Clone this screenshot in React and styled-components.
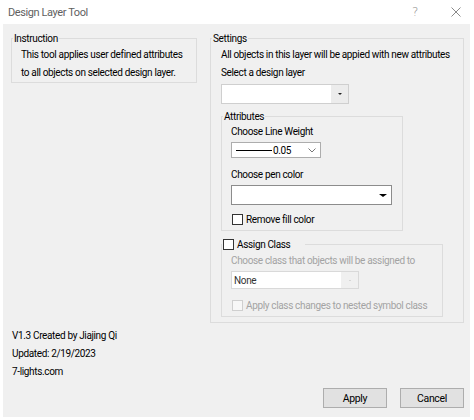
import React from 'react'
import styled, { createGlobalStyle } from "styled-components";

const GlobalStyle = createGlobalStyle`
  body {
    margin: 0;
    background: #ffffff;
    font-family: Roboto, "Liberation Sans", Arial, sans-serif;
    font-size: 10px;
    letter-spacing: -0.35px;
    color: #000;
  }
`;

const Window = styled.div`
  width: 474px;
  height: 420px;
  display: flex;
  flex-direction: column;
  background: #ffffff;
`;

const TitleBar = styled.div`
  height: 24px;
  display: flex;
  align-items: center;
  padding: 0 8px;
  color: #5f5f5f;
  font-size: 11px;
  letter-spacing: -0.4px;
`;

const Title = styled.div`
  flex: 1;
`;

const HelpButton = styled.div`
  width: 20px;
  margin-right: 21px;
  text-align: center;
  color: #8a8a8a;
  font-size: 12px;
  font-family: "DejaVu Sans", sans-serif;
  font-weight: 300;
`;

const CloseButton = styled.div`
  width: 20px;
  display: flex;
  justify-content: center;
`;

const Body = styled.div`
  flex: 1;
  margin: 0 4px 3px 3px;
  background: #f0f0f0;
  padding: 8px 6px 0 8px;
  display: flex;
  flex-direction: column;
`;

const TopRow = styled.div`
  display: flex;
  align-items: flex-start;
  gap: 13px;
`;

const Group = styled.fieldset`
  margin: ${(p) => p.mt || 0}px 0 0 0;
  padding: 0 0 ${(p) => p.pb || 0}px 0;
  width: ${(p) => p.w}px;
  box-sizing: border-box;
  border: 1px solid #dcdcdc;
  min-width: 0;
`;

const GroupContent = styled.div`
  padding-left: ${(p) => p.pl}px;
`;

const Legend = styled.legend`
  margin-left: 1px;
  padding: 0 1px;
  line-height: 13px;
  height: 13px;
`;

const CheckLegend = styled.legend`
  margin-left: 0;
  padding: 0;
  width: 83px;
  height: 13px;
  line-height: 13px;
  display: flex;
  align-items: center;
  gap: 3px;
`;

const Line = styled.div`
  line-height: 18px;
  height: 18px;
  white-space: nowrap;
  color: ${(p) => (p.disabled ? "#a3a3a3" : "#000")};
  margin-top: ${(p) => p.mt || 0}px;
`;

const Combo = styled.div`
  margin-top: ${(p) => p.mt || 0}px;
  width: ${(p) => p.w}px;
  height: ${(p) => p.h}px;
  box-sizing: border-box;
  border: 1px solid ${(p) => p.border};
  background: #ffffff;
  display: flex;
  align-items: stretch;
`;

const ComboValue = styled.div`
  flex: 1;
  display: flex;
  align-items: center;
  padding-left: ${(p) => p.pl || 2}px;
  color: ${(p) => (p.disabled ? "#333" : "#000")};
`;

const ComboArrow = styled.div`
  width: ${(p) => p.w}px;
  display: flex;
  align-items: center;
  justify-content: center;
  background: ${(p) => p.bg || "transparent"};
`;

const Triangle = styled.div`
  width: 0;
  height: 0;
  border-left: ${(p) => p.s}px solid transparent;
  border-right: ${(p) => p.s}px solid transparent;
  border-top: ${(p) => Math.round(p.s * 0.8)}px solid ${(p) => p.color};
`;

const WeightLine = styled.div`
  width: 36px;
  height: 1px;
  background: #000;
  margin-right: 1px;
`;

const CheckRow = styled.div`
  margin-top: ${(p) => p.mt || 0}px;
  height: 12px;
  display: flex;
  align-items: center;
  gap: 3px;
  white-space: nowrap;
  color: ${(p) => (p.disabled ? "#a3a3a3" : "#000")};
`;

const Box = styled.div`
  width: 11px;
  height: 11px;
  flex-shrink: 0;
  box-sizing: border-box;
  border: 1px solid ${(p) => (p.disabled ? "#cfcfcf" : "#333")};
  background: ${(p) => (p.disabled ? "#f7f7f7" : "#fff")};
  margin-left: ${(p) => p.ml || 0}px;
`;

const Footer = styled.div`
  margin-top: 4px;
  padding-left: 1px;
`;

const Buttons = styled.div`
  margin-top: 7px;
  display: flex;
  justify-content: flex-end;
  gap: 13px;
`;

const Button = styled.div`
  width: 64px;
  height: 20px;
  box-sizing: border-box;
  border: 1px solid #adadad;
  background: #e1e1e1;
  display: flex;
  align-items: center;
  justify-content: center;
  font-size: 10.5px;
`;

const Chevron = () => (
  <svg width="8" height="5" viewBox="0 0 8 5">
    <path d="M0.5 0.5 L4 4 L7.5 0.5" fill="none" stroke="#777" strokeWidth="1" />
  </svg>
);

const CloseIcon = () => (
  <svg width="10" height="10" viewBox="0 0 10 10">
    <path d="M0.5 0.5 L9.5 9.5 M9.5 0.5 L0.5 9.5" stroke="#8a8a8a" strokeWidth="1" />
  </svg>
);

export default function App() {
  return (
    <>
      <GlobalStyle />
      <Window>
        <TitleBar>
          <Title>Design Layer Tool</Title>
          <HelpButton>?</HelpButton>
          <CloseButton>
            <CloseIcon />
          </CloseButton>
        </TitleBar>
        <Body>
          <TopRow>
            <Group w={186}>
              <Legend>Instruction</Legend>
              <GroupContent pl={9}>
                <Line mt={1}>This tool applies user defined attributes</Line>
                <Line>to all objects on selected design layer.</Line>
              </GroupContent>
            </Group>
            <Group w={254} pb={5}>
              <Legend>Settings</Legend>
              <GroupContent pl={10}>
                <Line mt={1}>All objects in this layer will be appied with new attributes</Line>
                <Line>Select a design layer</Line>
                <Combo mt={2} w={128} h={20} border="#cfcfcf">
                  <ComboValue />
                  <ComboArrow w={17} bg="#ececec">
                    <Triangle s={2.5} color="#222" />
                  </ComboArrow>
                </Combo>

                <Group w={182} pb={5} mt={6}>
                  <Legend>Attributes</Legend>
                  <GroupContent pl={9}>
                    <Line>Choose Line Weight</Line>
                    <Combo mt={1} w={90} h={16} border="#adadad">
                      <ComboValue pl={4}>
                        <WeightLine />
                        0.05
                      </ComboValue>
                      <ComboArrow w={16}>
                        <Chevron />
                      </ComboArrow>
                    </Combo>
                    <Line mt={8}>Choose pen color</Line>
                    <Combo mt={1} w={161} h={20} border="#8c8c8c">
                      <ComboValue />
                      <ComboArrow w={17}>
                        <Triangle s={4} color="#000" />
                      </ComboArrow>
                    </Combo>
                    <CheckRow mt={8}>
                      <Box ml={1} />
                      Remove fill color
                    </CheckRow>
                  </GroupContent>
                </Group>

                <Group w={222} pb={5} mt={7}>
                  <CheckLegend>
                    <Box ml={1} />
                    Assign Class
                  </CheckLegend>
                  <GroupContent pl={9}>
                    <Line mt={1} disabled>Choose class that objects will be assigned to</Line>
                    <Combo mt={1} w={128} h={18} border="#d9d9d9">
                      <ComboValue disabled>None</ComboValue>
                      <ComboArrow w={17} bg="#f0f0f0">
                        <Triangle s={1.5} color="#bbb" />
                      </ComboArrow>
                    </Combo>
                    <CheckRow mt={10} disabled>
                      <Box ml={1} disabled />
                      Apply class changes to nested symbol class
                    </CheckRow>
                  </GroupContent>
                </Group>
              </GroupContent>
            </Group>
          </TopRow>

          <Footer>
            <Line>V1.3 Created by Jiajing Qi</Line>
            <Line>Updated: 2/19/2023</Line>
            <Line>7-lights.com</Line>
          </Footer>
          <Buttons>
            <Button>Apply</Button>
            <Button>Cancel</Button>
          </Buttons>
        </Body>
      </Window>
    </>
  );
}
